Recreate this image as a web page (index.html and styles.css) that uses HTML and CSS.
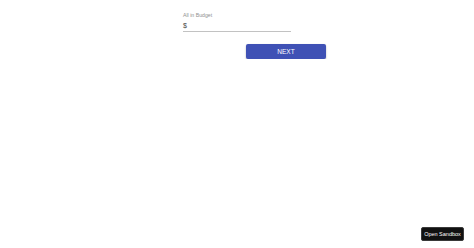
FILE: index.html
```html
<!DOCTYPE html>
<html>
<head>
<meta charset="utf-8">
<link rel="stylesheet" href="styles.css">
</head>
<body>
<main class="form">
  <div class="field">
    <label class="label">All in Budget</label>
    <div class="input-row"><span class="prefix">$</span></div>
  </div>
  <div class="actions">
    <button class="next">NEXT</button>
  </div>
</main>
<button class="sandbox">Open Sandbox</button>
</body>
</html>
```
FILE: styles.css
```css
html, body {
  margin: 0;
  padding: 0;
  background: #ffffff;
  font-family: "Liberation Sans", Arial, sans-serif;
}
.form {
  display: flex;
  flex-direction: column;
  margin-left: 183px;
  width: 143px;
  padding-top: 12px;
}
.field {
  display: flex;
  flex-direction: column;
  width: 108px;
}
.label {
  font-size: 5.2px;
  line-height: 6px;
  color: #8f8f8f;
}
.input-row {
  display: flex;
  align-items: center;
  height: 11px;
  margin-top: 2px;
  border-bottom: 1px solid #c2c2c2;
}
.prefix {
  font-size: 7px;
  color: #444444;
  line-height: 8px;
}
.actions {
  display: flex;
  justify-content: flex-end;
  margin-top: 12px;
}
.next {
  width: 80px;
  height: 15px;
  padding: 0;
  border: none;
  border-radius: 2px;
  background: #3f51b5;
  color: #ffffff;
  font-family: "Liberation Sans", Arial, sans-serif;
  font-size: 6.5px;
  box-shadow: 0 1px 2px rgba(0,0,0,0.3);
}
.sandbox {
  position: fixed;
  left: 421px;
  top: 227px;
  width: 43px;
  height: 14px;
  padding: 0;
  border: 1px solid #3a3a3a;
  border-radius: 2px;
  background: #111111;
  color: #ffffff;
  font-family: "Liberation Sans", Arial, sans-serif;
  font-size: 5.5px;
}
```
